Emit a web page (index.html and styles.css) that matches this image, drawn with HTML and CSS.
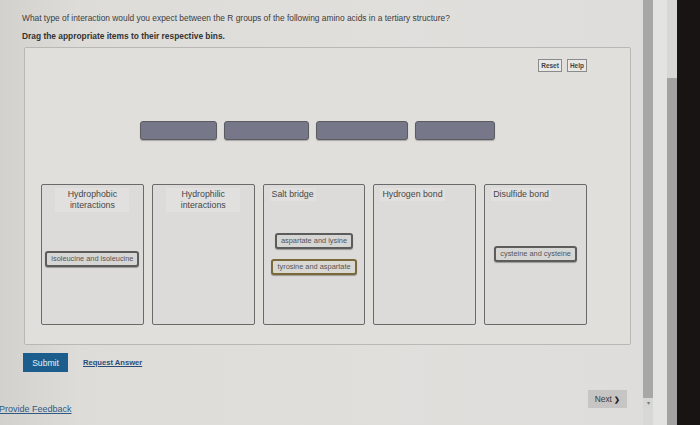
FILE: index.html
```html
<!DOCTYPE html>
<html>
<head>
<meta charset="utf-8">
<link rel="stylesheet" href="styles.css">
</head>
<body>
<div class="page">
  <div class="main">
    <p class="question">What type of interaction would you expect between the R groups of the following amino acids in a tertiary structure?</p>
    <p class="instruction">Drag the appropriate items to their respective bins.</p>
    <div class="activity">
      <div class="toolbar">
        <button class="tool-btn">Reset</button>
        <button class="tool-btn">Help</button>
      </div>
      <div class="pool">
        <span class="slot slot-a"></span>
        <span class="slot slot-b"></span>
        <span class="slot slot-c"></span>
        <span class="slot slot-d"></span>
      </div>
      <div class="bins">
        <div class="bin">
          <div class="bin-label wrap">Hydrophobic interactions</div>
          <div class="bin-items">
            <span class="item">isoleucine and isoleucine</span>
          </div>
        </div>
        <div class="bin">
          <div class="bin-label wrap">Hydrophilic interactions</div>
          <div class="bin-items"></div>
        </div>
        <div class="bin">
          <div class="bin-label">Salt bridge</div>
          <div class="bin-items">
            <span class="item">aspartate and lysine</span>
            <span class="item hover">tyrosine and aspartate</span>
          </div>
        </div>
        <div class="bin">
          <div class="bin-label">Hydrogen bond</div>
          <div class="bin-items"></div>
        </div>
        <div class="bin">
          <div class="bin-label">Disulfide bond</div>
          <div class="bin-items">
            <span class="item">cysteine and cysteine</span>
          </div>
        </div>
      </div>
    </div>
    <div class="actions">
      <button class="submit">Submit</button>
      <a class="request" href="#">Request Answer</a>
    </div>
    <div class="footer">
      <a class="feedback" href="#">Provide Feedback</a>
      <button class="next">Next <span class="chev">&#x276F;</span></button>
    </div>
  </div>
  <div class="vscroll">
    <div class="thumb"></div>
    <div class="arrow">&#x25BE;</div>
  </div>
  <div class="strip"></div>
  <div class="outer-scroll"><div class="outer-thumb"></div></div>
  <div class="bezel"></div>
</div>
</body>
</html>
```

FILE: styles.css
```css
html, body {
  margin: 0;
  padding: 0;
}
body {
  width: 700px;
  height: 425px;
  overflow: hidden;
  font-family: "Liberation Sans", Arial, sans-serif;
  color: #3a3a3a;
  background: #dcdbd8;
}
.page {
  display: flex;
  height: 425px;
}
.main {
  width: 643px;
  flex: none;
  padding-left: 22px;
  box-sizing: border-box;
  background: linear-gradient(90deg, #d2d1ce 0%, #dddcd9 12%, #e0dfdc 60%, #dedddb 100%);
}
.question {
  margin: 12px 0 0;
  font-size: 8.4px;
  line-height: 12px;
  color: #3c3c3c;
  white-space: nowrap;
}
.instruction {
  margin: 6px 0 0;
  font-size: 8.4px;
  line-height: 12px;
  font-weight: bold;
  color: #333;
}
.activity {
  margin: 5px 0 0 2px;
  width: 607px;
  height: 298px;
  box-sizing: border-box;
  border: 1px solid #b9b8b5;
  border-radius: 2px;
  padding: 11px 43px 0 16px;
  background: #e0dfdc;
}
.toolbar {
  display: flex;
  justify-content: flex-end;
  gap: 5px;
}
.tool-btn {
  font-family: inherit;
  font-size: 6.5px;
  font-weight: bold;
  color: #444;
  background: #e8e8e6;
  border: 1px solid #8a8a8a;
  padding: 0 2px;
  height: 13px;
  line-height: 11px;
  margin: 0;
}
.pool {
  display: flex;
  justify-content: center;
  gap: 7px;
  margin-top: 49px;
  padding-left: 6px;
}
.slot {
  height: 19px;
  box-sizing: border-box;
  border: 1.5px solid #5b5b60;
  border-radius: 3px;
  background: #77778a;
  box-shadow: 0 1px 1px rgba(0,0,0,0.25);
}
.slot-a { width: 77px; }
.slot-b { width: 85px; }
.slot-c { width: 92px; }
.slot-d { width: 80px; }
.bins {
  display: flex;
  gap: 8px;
  margin-top: 44px;
}
.bin {
  width: 104px;
  height: 141px;
  box-sizing: border-box;
  border: 1.5px solid #6a6a6a;
  border-radius: 2px;
  background: #dcdbd9;
  display: flex;
  flex-direction: column;
  align-items: flex-start;
}
.bin-label {
  margin: 3px 0 0 6px;
  padding: 1px 2px;
  font-size: 8.8px;
  line-height: 11px;
  color: #474747;
  background: #e1e0de;
  text-align: center;
  max-width: 70px;
}
.bin-label.wrap {
  align-self: center;
  margin-left: 0;
}
.bin-items {
  flex: 1;
  align-self: stretch;
  display: flex;
  flex-direction: column;
  align-items: center;
  justify-content: center;
  gap: 10px;
  padding-bottom: 18px;
}
.item {
  display: inline-block;
  box-sizing: border-box;
  height: 16px;
  line-height: 12px;
  padding: 0 4px;
  font-size: 7.4px;
  color: #555;
  background: #d6d6d5;
  border: 2px solid #5c5c5c;
  border-radius: 3px;
  white-space: nowrap;
  box-shadow: 0 1px 1px rgba(0,0,0,0.3);
}
.item.hover {
  border-color: #7a6a3a;
  background: #dad8d2;
}
.actions {
  display: flex;
  align-items: center;
  gap: 15px;
  margin-top: 8px;
  margin-left: 1px;
}
.submit {
  font-family: inherit;
  width: 45px;
  height: 19px;
  margin: 0;
  padding: 0;
  border: none;
  background: #1b5e8d;
  color: #e8eef3;
  font-size: 8.6px;
}
.request {
  font-size: 7.6px;
  font-weight: bold;
  color: #2a4d78;
  text-decoration: underline;
}
.footer {
  display: flex;
  justify-content: space-between;
  align-items: flex-start;
  margin-top: 18px;
  margin-left: -23px;
  padding-right: 16px;
}
.feedback {
  margin-top: 14px;
  font-size: 9px;
  color: #2f5a85;
  text-decoration: underline;
}
.next {
  font-family: inherit;
  width: 39px;
  height: 18px;
  margin: 0;
  padding: 0;
  border: none;
  background: #c6c5c3;
  color: #3a3a3a;
  font-size: 8.4px;
}
.chev {
  font-size: 7px;
  font-weight: bold;
  color: #222;
}
.vscroll {
  width: 10px;
  flex: none;
  display: flex;
  flex-direction: column;
  background: #d8d8d6;
}
.thumb {
  height: 398px;
  background: #a7a7a7;
}
.arrow {
  font-size: 6px;
  line-height: 10px;
  text-align: center;
  color: #777;
  background: #d6d6d4;
}
.strip {
  width: 14px;
  flex: none;
  background: #e3e3e2;
}
.outer-scroll {
  width: 10px;
  flex: none;
  background: #d7d7d6;
  display: flex;
  flex-direction: column;
}
.outer-thumb {
  margin-top: 78px;
  flex: 1;
  background: #a2a2a2;
}
.bezel {
  flex: 1;
  background: #181414;
}
```
